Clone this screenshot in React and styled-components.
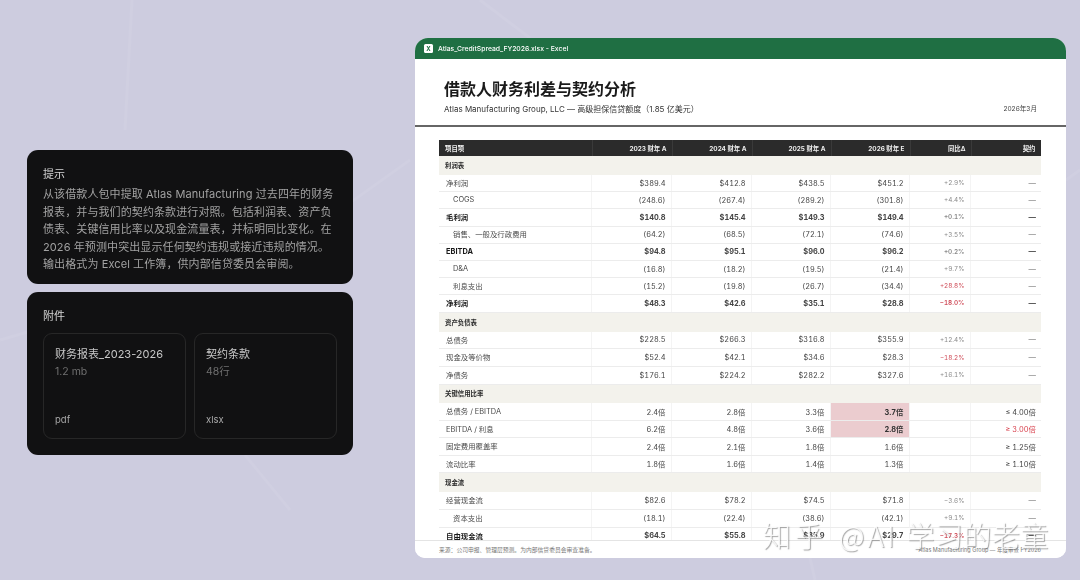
import React from "react";
import styled, { createGlobalStyle } from "styled-components";

const Global = createGlobalStyle`
  html, body { margin: 0; padding: 0; }
  body { width: 1080px; height: 580px; overflow: hidden; background: #cdccdf; }
`;

const FONT = `Inter, "Noto Sans CJK SC", "Noto Sans", sans-serif`;

const Page = styled.div`
  position: relative;
  width: 1080px;
  height: 580px;
  overflow: hidden;
  background: #cdccdf;
  font-family: ${FONT};
  display: flex;
  align-items: flex-start;
`;
const Decor = styled.svg`
  position: absolute;
  inset: 0;
  width: 1080px;
  height: 580px;
`;
const LeftColumn = styled.div`
  position: relative;
  width: 326px;
  margin: 150px 0 0 27px;
  display: flex;
  flex-direction: column;
  gap: 8px;
  filter: blur(0.25px);
`;
const DarkCard = styled.section`
  background: #111112;
  border-radius: 11px;
  padding: 17px 16px 16px;
  box-sizing: border-box;
  height: ${p => p.$h}px;
`;
const CardTitle = styled.div`
  color: #d6d6d6;
  font-size: 11px;
  line-height: 14px;
`;
const Prompt = styled.p`
  margin: 5px 0 0;
  color: #a2a2a2;
  font-size: 11px;
  line-height: 17.6px;
  letter-spacing: 0.1px;
  white-space: nowrap;
`;
const Files = styled.div`
  display: grid;
  grid-template-columns: 143px 143px;
  gap: 8px;
  margin-top: 10px;
`;
const FileCard = styled.div`
  height: 106px;
  box-sizing: border-box;
  border: 1px solid #272727;
  border-radius: 9px;
  padding: 13px 11px 12px;
  display: flex;
  flex-direction: column;
`;
const FileName = styled.div`
  color: #c8c8c8;
  font-size: 11px;
  line-height: 15px;
`;
const FileMeta = styled.div`
  color: #707070;
  font-size: 10.5px;
  line-height: 15px;
  margin-top: 2px;
`;
const FileType = styled.div`
  color: #a8a8a8;
  font-size: 9.5px;
  line-height: 13px;
  margin-top: auto;
`;

const Sheet = styled.main`
  position: relative;
  width: 651px;
  height: 520px;
  margin: 38px 0 0 62px;
  background: #fff;
  border-radius: 13px 13px 10px 10px;
  overflow: hidden;
  display: flex;
  flex-direction: column;
  filter: blur(0.25px);
`;
const TitleBar = styled.header`
  flex: none;
  height: 21px;
  background: #1f6f43;
  display: flex;
  align-items: center;
  gap: 5px;
  padding-left: 9px;
  color: #fff;
  font-size: 6.8px;
  font-weight: 500;
`;
const XBadge = styled.span`
  width: 9px;
  height: 9px;
  background: #fff;
  border-radius: 1.5px;
  color: #1f6f43;
  font-size: 6px;
  font-weight: 700;
  display: flex;
  align-items: center;
  justify-content: center;
`;
const Heading = styled.div`
  flex: none;
  height: 68px;
  box-sizing: border-box;
  border-bottom: 2px solid #666;
  padding: 19px 29px 0 29px;
`;
const H1 = styled.h1`
  margin: 0;
  font-size: 16px;
  line-height: 22px;
  font-weight: 700;
  color: #1a1a1a;
`;
const SubRow = styled.div`
  display: flex;
  justify-content: space-between;
  align-items: center;
  margin-top: 3px;
  font-size: 8px;
  line-height: 13px;
  color: #333;
`;
const DateText = styled.span`
  font-size: 6.6px;
  color: #444;
`;
const TableWrap = styled.div`
  flex: 1;
  min-height: 0;
  overflow: hidden;
  padding: 13px 25px 0 24px;
`;
const COLS = "153px 80px 80px 79px 79px 61px 70px";
const HeadRow = styled.div`
  display: grid;
  grid-template-columns: ${COLS};
  height: 16px;
  background: #2b2b2b;
  color: #eeeeee;
  font-size: 6.4px;
  font-weight: 700;
`;
const HeadCell = styled.div`
  display: flex;
  align-items: center;
  justify-content: ${p => (p.$left ? "flex-start" : "flex-end")};
  padding: 0 5.5px 0 6px;
  border-left: ${p => (p.$left ? "none" : "1px solid #3a3a3a")};
`;
const SectionRow = styled.div`
  height: ${p => p.$h}px;
  display: flex;
  align-items: center;
  padding-left: 6px;
  background: #f3f2ec;
  color: #2a2a2a;
  font-size: 6.4px;
  font-weight: 700;
`;
const Row = styled.div`
  display: grid;
  grid-template-columns: ${COLS};
  height: ${p => p.$h}px;
  box-sizing: border-box;
  border-bottom: 0.6px solid #ececec;
  color: #444;
  font-size: 7.4px;
  font-variant-numeric: tabular-nums;
  font-weight: ${p => (p.$bold ? 700 : 400)};
`;
const Label = styled.div`
  display: flex;
  align-items: center;
  padding-left: ${p => (p.$indent ? 14 : 7)}px;
  padding-bottom: 1.5px;
  border-right: 0.6px solid #f4f4f4;
  color: ${p => (p.$bold ? "#1a1a1a" : "#4a4a4a")};
`;
const Num = styled.div`
  display: flex;
  align-items: center;
  justify-content: flex-end;
  padding-right: 5.5px;
  border-right: 0.6px solid #f4f4f4;
  background: ${p => (p.$flag ? "#ebcccf" : "transparent")};
  color: ${p => (p.$flag ? "#333" : "inherit")};
  font-weight: ${p => (p.$flag ? 700 : "inherit")};
`;
const Yoy = styled(Num)`
  font-size: 6.4px;
  font-weight: ${p => (p.$strong ? 600 : 400)};
  color: ${p => (p.$red ? "#d0505c" : "#8a8a8a")};
`;
const Cov = styled(Num)`
  border-right: none;
  padding-right: 5px;
  color: ${p => (p.$red ? "#d8424e" : p.$dim ? "#777" : "#444")};
`;
const Footer = styled.footer`
  flex: none;
  height: 18px;
  box-sizing: border-box;
  border-top: 0.6px solid #e4e4e4;
  padding: 0 25px 0 24px;
  display: flex;
  align-items: center;
  justify-content: space-between;
  color: #777;
  font-size: 5.8px;
  background: #fff;
`;
const FootRight = styled.span`
  font-size: 5.5px;
`;
const Watermark = styled.div`
  position: absolute;
  left: 763px;
  top: 515px;
  display: flex;
  color: rgba(255, 255, 255, 0.85);
  font-family: "Noto Sans CJK SC", sans-serif;
  font-size: 28px;
  font-weight: 300;
  line-height: 40px;
  white-space: nowrap;
  text-shadow: 1px 1px 1px rgba(90, 90, 90, 0.55);
`;
const MarkPart = styled.span`
  margin-left: ${p => p.$gap || 0}px;
  letter-spacing: ${p => p.$ls || 0}px;
`;

const data = [
  { s: "利润表", h: 19 },
  { h: 17.2, l: "净利润", v: ["$389.4", "$412.8", "$438.5", "$451.2"], y: "+2.9%", c: "—" },
  { h: 17.2, l: "COGS", i: 1, v: ["(248.6)", "(267.4)", "(289.2)", "(301.8)"], y: "+4.4%", c: "—" },
  { h: 17.2, l: "毛利润", b: 1, v: ["$140.8", "$145.4", "$149.3", "$149.4"], y: "+0.1%", c: "—" },
  { h: 17.2, l: "销售、一般及行政费用", i: 1, v: ["(64.2)", "(68.5)", "(72.1)", "(74.6)"], y: "+3.5%", c: "—" },
  { h: 17.2, l: "EBITDA", b: 1, v: ["$94.8", "$95.1", "$96.0", "$96.2"], y: "+0.2%", c: "—" },
  { h: 17.2, l: "D&A", i: 1, v: ["(16.8)", "(18.2)", "(19.5)", "(21.4)"], y: "+9.7%", c: "—" },
  { h: 17.2, l: "利息支出", i: 1, v: ["(15.2)", "(19.8)", "(26.7)", "(34.4)"], y: "+28.8%", yr: 1, c: "—" },
  { h: 17.2, l: "净利润", b: 1, v: ["$48.3", "$42.6", "$35.1", "$28.8"], y: "−18.0%", yr: 1, c: "—" },
  { s: "资产负债表", h: 19 },
  { h: 17.7, l: "总债务", v: ["$228.5", "$266.3", "$316.8", "$355.9"], y: "+12.4%", c: "—" },
  { h: 17.7, l: "现金及等价物", v: ["$52.4", "$42.1", "$34.6", "$28.3"], y: "−18.2%", yr: 1, c: "—" },
  { h: 17.7, l: "净债务", v: ["$176.1", "$224.2", "$282.2", "$327.6"], y: "+16.1%", c: "—" },
  { s: "关键信用比率", h: 18.6 },
  { h: 17.5, l: "总债务 / EBITDA", v: ["2.4倍", "2.8倍", "3.3倍", "3.7倍"], f: 1, c: "≤ 4.00倍" },
  { h: 17.5, l: "EBITDA / 利息", v: ["6.2倍", "4.8倍", "3.6倍", "2.8倍"], f: 1, c: "≥ 3.00倍", cr: 1 },
  { h: 17.5, l: "固定费用覆盖率", v: ["2.4倍", "2.1倍", "1.8倍", "1.6倍"], c: "≥ 1.25倍" },
  { h: 17.5, l: "流动比率", v: ["1.8倍", "1.6倍", "1.4倍", "1.3倍"], c: "≥ 1.10倍" },
  { s: "现金流", h: 19 },
  { h: 17.7, l: "经营现金流", v: ["$82.6", "$78.2", "$74.5", "$71.8"], y: "−3.6%", c: "—" },
  { h: 17.7, l: "资本支出", i: 1, v: ["(18.1)", "(22.4)", "(38.6)", "(42.1)"], y: "+9.1%", c: "—" },
  { h: 17.7, l: "自由现金流", b: 1, v: ["$64.5", "$55.8", "$35.9", "$29.7"], y: "−17.3%", yr: 1, c: "—" },
];
const heads = ["2023 财年 A", "2024 财年 A", "2025 财年 A", "2026 财年 E", "同比Δ", "契约"];

export default function App() {
  return (
    <Page>
      <Global />
      <Decor viewBox="0 0 1080 580" aria-hidden="true">
        <g fill="none" stroke="#d0cfe1" strokeWidth="3">
          <path d="M0 340 L120 305" />
          <path d="M125 130 L132 0" />
          <path d="M340 210 L410 160" />
          <path d="M245 455 L290 510" />
          <path d="M480 0 L530 38" />
          <path d="M1066 180 L1080 170" />
          <path d="M810 558 L815 580" />
        </g>
      </Decor>
      <LeftColumn>
        <DarkCard $h={134}>
          <CardTitle>提示</CardTitle>
          <Prompt>
            从该借款人包中提取 Atlas Manufacturing 过去四年的财务<br />
            报表，并与我们的契约条款进行对照。包括利润表、资产负<br />
            债表、关键信用比率以及现金流量表，并标明同比变化。在<br />
            2026 年预测中突出显示任何契约违规或接近违规的情况。<br />
            输出格式为 Excel 工作簿，供内部信贷委员会审阅。
          </Prompt>
        </DarkCard>
        <DarkCard $h={163}>
          <CardTitle>附件</CardTitle>
          <Files>
            <FileCard>
              <FileName>财务报表_2023-2026</FileName>
              <FileMeta>1.2 mb</FileMeta>
              <FileType>pdf</FileType>
            </FileCard>
            <FileCard>
              <FileName>契约条款</FileName>
              <FileMeta>48行</FileMeta>
              <FileType>xlsx</FileType>
            </FileCard>
          </Files>
        </DarkCard>
      </LeftColumn>
      <Sheet>
        <TitleBar>
          <XBadge>X</XBadge>
          Atlas_CreditSpread_FY2026.xlsx - Excel
        </TitleBar>
        <Heading>
          <H1>借款人财务利差与契约分析</H1>
          <SubRow>
            <span>Atlas Manufacturing Group, LLC — 高级担保信贷额度（1.85 亿美元）</span>
            <DateText>2026年3月</DateText>
          </SubRow>
        </Heading>
        <TableWrap>
          <HeadRow>
            <HeadCell $left>项目项</HeadCell>
            {heads.map(h => <HeadCell key={h}>{h}</HeadCell>)}
          </HeadRow>
          {data.map((r, idx) =>
            r.s ? (
              <SectionRow key={idx} $h={r.h}>{r.s}</SectionRow>
            ) : (
              <Row key={idx} $bold={r.b} $h={r.h}>
                <Label $indent={r.i} $bold={r.b}>{r.l}</Label>
                {r.v.map((v, i) => (
                  <Num key={i} $flag={r.f && i === 3}>{v}</Num>
                ))}
                <Yoy $red={r.yr} $strong={r.b}>{r.y || ""}</Yoy>
                <Cov $red={r.cr} $dim={r.c === "—" && !r.b}>{r.c}</Cov>
              </Row>
            )
          )}
        </TableWrap>
        <Footer>
          <span>来源：公司申报、管理层预测。为内部信贷委员会审查准备。</span>
          <FootRight>Atlas Manufacturing Group — 年度审查 FY2026</FootRight>
        </Footer>
      </Sheet>
      <Watermark>
        <MarkPart $ls={4}>知乎</MarkPart>
        <MarkPart $gap={12} $ls={3}>@AI</MarkPart>
        <MarkPart $gap={9} $ls={0.5}>学习的老童</MarkPart>
      </Watermark>
    </Page>
  );
}
